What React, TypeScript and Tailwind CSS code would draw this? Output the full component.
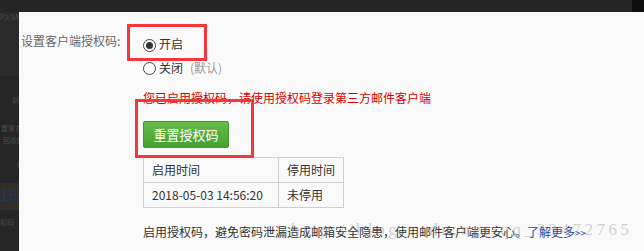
const App: React.FC = () => {
    return (
        <div className="relative flex flex-col w-[644px] h-[251px] overflow-hidden bg-[#262626] font-['Noto_Sans_CJK_SC','Noto_Sans',sans-serif]">
            {/* top bar */}
            <div className="flex h-[12px] shrink-0 justify-end bg-[#252525]">
                <div className="w-[12px] h-[12px] bg-[#0e0e0e]" />
            </div>

            <div className="flex flex-1">
                {/* dimmed page behind the dialog */}
                <div className="flex flex-col w-[19px] shrink-0 overflow-hidden text-[7px] leading-[9px] text-[#4a4a4a] whitespace-nowrap">
                    <div className="h-[64px] bg-[#2a2a2a] pt-px">P3/SMT</div>
                    <div className="h-[23px] pt-[20px] pl-[12px]">新</div>
                    <div className="pt-[25px] pl-[1px]">置第方邮</div>
                    <div className="pt-[3px] pl-[3px]">回收邮</div>
                    <div className="pt-[16px] pl-[17px]">G</div>
                    <div className="mt-[13px] h-[27px] bg-[#332f28] pt-[4px] text-[16px] leading-[18px] text-[#1c3763] font-['Liberation_Sans',sans-serif]">164</div>
                    <div className="pt-[8px]">权码</div>
                </div>

                {/* dialog */}
                <div className="flex-1 bg-[#f9f9f9] pl-[2px] pt-[20px] text-[12px] leading-[16px] text-[#555]">
                    <div className="flex">
                        <div className="w-[122px] shrink-0 pt-[1px] text-[#666]">设置客户端授权码:</div>
                        <div className="flex flex-col">
                            <label className="flex h-[24px] items-center gap-[3px] text-[#333]">
                                <span className="flex w-[13px] h-[13px] mt-[2px] items-center justify-center rounded-full border border-[#444] bg-white">
                                    <span className="w-[7px] h-[7px] rounded-full bg-[#333]" />
                                </span>
                                开启
                            </label>
                            <label className="flex h-[24px] items-center gap-[3px] text-[#333]">
                                <span className="w-[13px] h-[13px] mt-[1px] rounded-full border border-[#444] bg-white" />
                                关闭<span className="ml-[4px] text-[#999]">(默认)</span>
                            </label>

                            <p className="mt-[10px] text-[#d40000]">您已启用授权码，请使用授权码登录第三方邮件客户端</p>

                            <button className="mt-[15px] w-[86px] h-[27px] rounded-[2px] border border-[#47952c] bg-gradient-to-b from-[#66bd4c] to-[#46a02f] text-[13px] text-white">
                                重置授权码
                            </button>

                            <table className="mt-[9px] w-[201px] border-collapse text-[#333]">
                                <tbody>
                                    <tr className="h-[25px]">
                                        <td className="w-[135px] border border-[#cfcfcf] pl-[8px]">启用时间</td>
                                        <td className="border border-[#cfcfcf] pl-[8px]">停用时间</td>
                                    </tr>
                                    <tr className="h-[25px]">
                                        <td className="border border-[#cfcfcf] pl-[8px]">2018-05-03 14:56:20</td>
                                        <td className="border border-[#cfcfcf] pl-[8px]">未停用</td>
                                    </tr>
                                </tbody>
                            </table>

                            <p className="mt-[16px] whitespace-nowrap text-[#333]">
                                启用授权码，避免密码泄漏造成邮箱安全隐患，使用邮件客户端更安心。
                                <a href="#" className="text-[#1b46a8]">了解更多<span className="text-[10px]">&gt;&gt;</span></a>
                            </p>
                        </div>
                    </div>
                </div>
            </div>

            {/* annotation boxes */}
            <div className="pointer-events-none absolute left-[127px] top-[24px] w-[80px] h-[37px] border-[3px] border-[#f5363c]" />
            <div className="pointer-events-none absolute left-[135px] top-[99px] w-[119px] h-[59px] border-[3px] border-[#f5363c]" />

            {/* watermark */}
            <div className="pointer-events-none absolute left-[291px] top-[219px] whitespace-nowrap text-[17px] leading-[22px] tracking-[3.5px] text-[#9a9a9a]/45 font-['Liberation_Serif',serif]">
                http://blog.csdn.net/qq_33472765
            </div>
        </div>
    );
};

export default App;
